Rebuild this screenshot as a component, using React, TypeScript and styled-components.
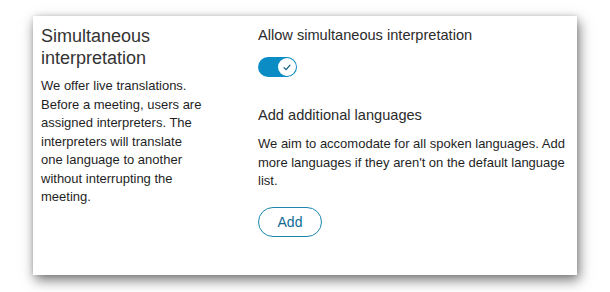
import React from "react";
import styled, { createGlobalStyle } from "styled-components";

const Global = createGlobalStyle`
  html, body { margin: 0; padding: 0; background: #ffffff; }
  body { font-family: "Liberation Sans", Arial, sans-serif; }
`;

const Page = styled.div`
  padding: 16px 0 17px 33px;
  min-height: 292px;
  box-sizing: border-box;
`;

const Card = styled.section`
  box-sizing: border-box;
  width: 544px;
  height: 259px;
  background: #fff;
  box-shadow: 2px 5px 12px rgba(0, 0, 0, 0.55), 0 0 4px rgba(0, 0, 0, 0.12);
  padding: 9px 3px 0 8px;
  display: grid;
  grid-template-columns: 166px 316px;
  column-gap: 51px;
  align-items: start;
`;

const Column = styled.div`
  display: flex;
  flex-direction: column;
  align-items: flex-start;
`;

const Title = styled.h2`
  margin: 0;
  font-size: 18px;
  line-height: 22px;
  font-weight: 400;
  color: #333333;
`;

const Text = styled.p<{ $top?: number }>`
  margin: ${(p) => p.$top ?? 0}px 0 0;
  font-size: 13px;
  line-height: 18.5px;
  color: #1f1f1f;
`;

const Heading = styled.h3<{ $top?: number }>`
  margin: ${(p) => p.$top ?? 0}px 0 0;
  font-size: 14.6px;
  line-height: 20px;
  font-weight: 400;
  color: #2b2b2b;
`;

const Toggle = styled.div`
  margin-top: 12px;
  width: 39px;
  height: 20px;
  border-radius: 10px;
  background: #0b8cc4;
  position: relative;
`;

const Knob = styled.span`
  position: absolute;
  right: 1px;
  top: 1px;
  width: 18px;
  height: 18px;
  border-radius: 50%;
  background: #fff;
  display: flex;
  align-items: center;
  justify-content: center;
`;

const AddButton = styled.button`
  margin-top: 16px;
  width: 64px;
  height: 30px;
  border-radius: 15px;
  border: 1px solid #1a86ad;
  background: #fff;
  color: #0d6b94;
  font-family: "Liberation Sans", Arial, sans-serif;
  font-size: 14px;
  padding: 0;
`;

export default function App() {
  return (
    <>
      <Global />
      <Page>
        <Card>
          <Column>
            <Title>Simultaneous interpretation</Title>
            <Text $top={8}>
              We offer live translations. Before a meeting, users are assigned
              interpreters. The interpreters will translate one language to
              another without interrupting the meeting.
            </Text>
          </Column>
          <Column>
            <Heading>Allow simultaneous interpretation</Heading>
            <Toggle>
              <Knob>
                <svg width="8" height="7" viewBox="0 0 8 7">
                  <path
                    d="M1 3.6 L3.1 5.6 L7 1.2"
                    fill="none"
                    stroke="#0a5a86"
                    strokeWidth="1.2"
                    strokeLinecap="round"
                    strokeLinejoin="round"
                  />
                </svg>
              </Knob>
            </Toggle>
            <Heading $top={28}>Add additional languages</Heading>
            <Text $top={10}>
              We aim to accomodate for all spoken languages. Add more languages
              if they aren't on the default language list.
            </Text>
            <AddButton>Add</AddButton>
          </Column>
        </Card>
      </Page>
    </>
  );
}
